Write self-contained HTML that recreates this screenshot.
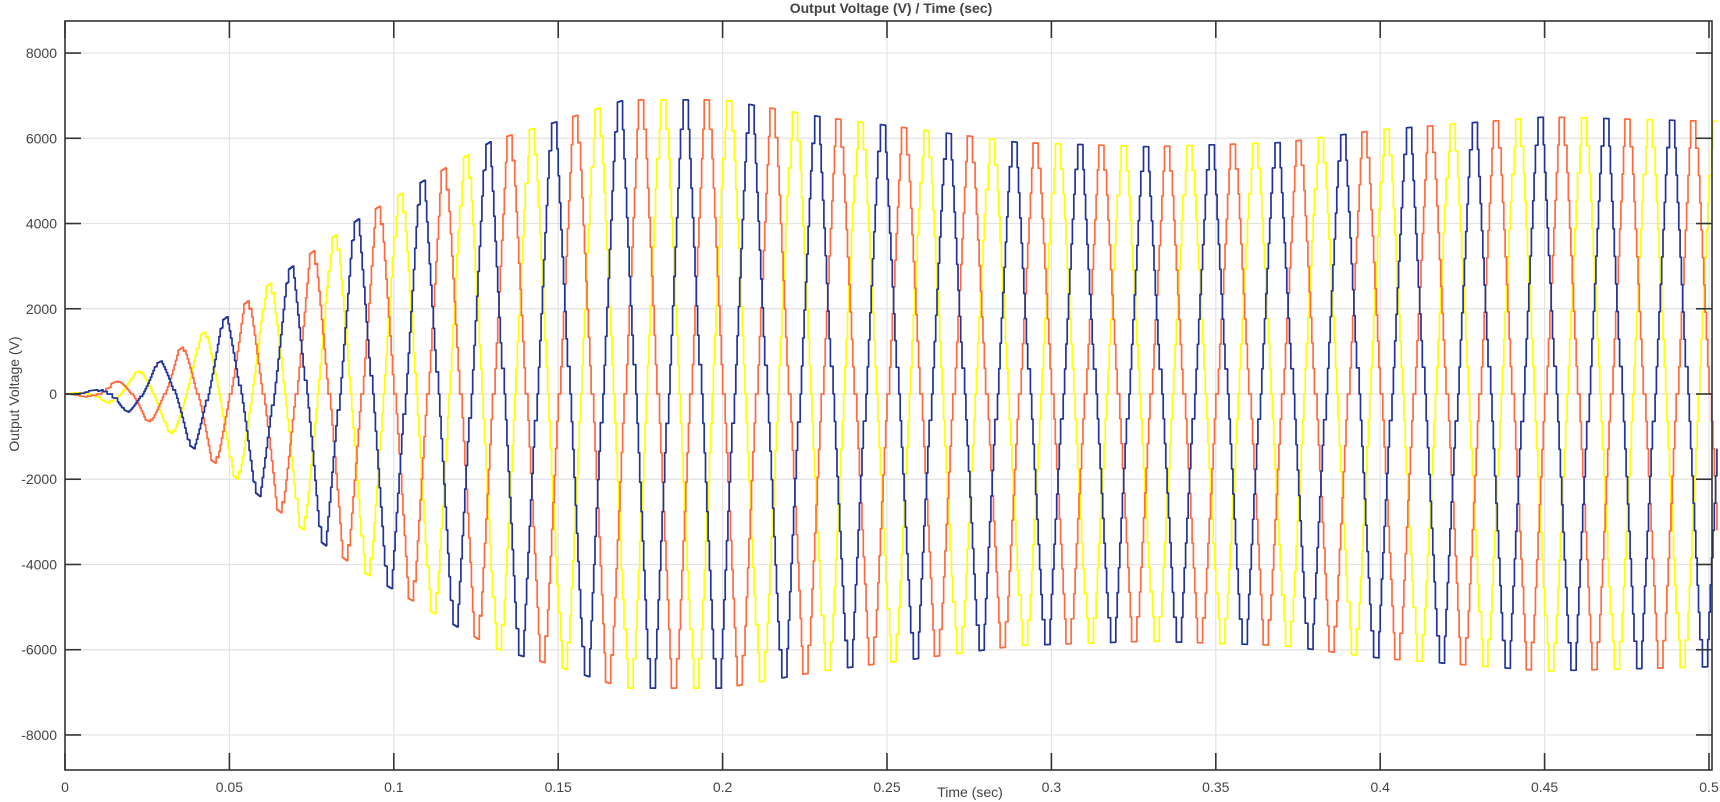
<!DOCTYPE html>
<html><head><meta charset="utf-8"><style>
html,body{margin:0;padding:0;background:#fff;width:1720px;height:802px;overflow:hidden}
svg{display:block}
text{font-family:"Liberation Sans",Arial,sans-serif;fill:#444}
</style></head><body>
<svg id="s" width="1720" height="802" viewBox="0 0 1720 802" xmlns="http://www.w3.org/2000/svg">
<rect x="0" y="0" width="1720" height="802" fill="#fff"/>
<g id="grid" stroke="#e3e3e3" stroke-width="1.2"></g>
<g id="waves" fill="none" stroke-width="1.7" stroke-linejoin="round"></g>
<g id="axes" stroke="#333" stroke-width="1.6" fill="none"></g>
<g id="labels" font-size="14"></g>
<text x="891" y="13" font-size="14" font-weight="bold" text-anchor="middle" fill="#222">Output Voltage (V) / Time (sec)</text>
<text x="970" y="797" font-size="14" text-anchor="middle" fill="#333">Time (sec)</text>
<text transform="translate(19,394) rotate(-90)" font-size="14" text-anchor="middle" fill="#333">Output Voltage (V)</text>
</svg>
<script>
var NS="http://www.w3.org/2000/svg";
var L=65,R=1712,T=21,B=770;
function X(t){return 65+t*3288;}
function Y(v){return 394-v*0.04262;}
function el(p,tag,a){var e=document.createElementNS(NS,tag);for(var k in a)e.setAttribute(k,a[k]);p.appendChild(e);return e;}
var grid=document.getElementById('grid'),axes=document.getElementById('axes'),lab=document.getElementById('labels');
for(var i=1;i<=10;i++){var x=X(i*0.05);el(grid,'line',{x1:x,y1:T,x2:x,y2:B});}
for(var v=-8000;v<=8000;v+=2000){var y=Y(v);el(grid,'line',{x1:L,y1:y,x2:R,y2:y});}
el(axes,'rect',{x:L,y:T,width:R-L,height:B-T});
for(var i=0;i<=10;i++){var x=X(i*0.05);
 el(axes,'line',{x1:x,y1:B,x2:x,y2:B-17});el(axes,'line',{x1:x,y1:T,x2:x,y2:T+17});
 var t=el(lab,'text',{x:x,y:792,'text-anchor':'middle'});t.textContent=(i==0?'0':String(+(i*0.05).toFixed(2)));}
for(var v=-8000;v<=8000;v+=2000){var y=Y(v);
 el(axes,'line',{x1:L,y1:y,x2:L+16,y2:y});el(axes,'line',{x1:R,y1:y,x2:R-16,y2:y});
 var t=el(lab,'text',{x:57,y:y+5,'text-anchor':'end'});t.textContent=String(v);}
var env=[[0,0],[0.01,100],[0.03,800],[0.05,1850],[0.07,3050],[0.09,4150],[0.11,5050],[0.13,5950],[0.15,6400],[0.17,6900],[0.2,6900],[0.23,6500],[0.26,6200],[0.29,5900],[0.33,5800],[0.37,5900],[0.4,6200],[0.45,6500],[0.5,6400],[0.52,6400]];
function A(t){for(var i=1;i<env.length;i++){if(t<=env[i][0]){var a=env[i-1],b=env[i];return a[1]+(b[1]-a[1])*(t-a[0])/(b[0]-a[0]);}}return 6400;}
var w=document.getElementById('waves');
var cols=['#ffff00','#ff6b3f','#22349a'],ph=[-4*Math.PI/3,-2*Math.PI/3,0];
for(var c=0;c<3;c++){
 var d='',dt=0.0004,prev=null;
 for(var t=0;t<=0.5025;t+=dt){
  var a=A(t),th=2*Math.PI*50*(t-0.0285)+ph[c];
  var s=(Math.cos(th)+0.09*Math.cos(3*th))/1.09;
  var val=a*s;
  var q=a>300?a/10:a/3+1;val=Math.round(val/q)*q;
  var x=X(t).toFixed(1),y=Y(val).toFixed(1);
  if(prev===null)d='M'+x+' '+y;else d+=' H'+x+' V'+y;
  prev=y;
 }
 el(w,'path',{d:d,stroke:cols[c]});
}
</script>
</body></html>
